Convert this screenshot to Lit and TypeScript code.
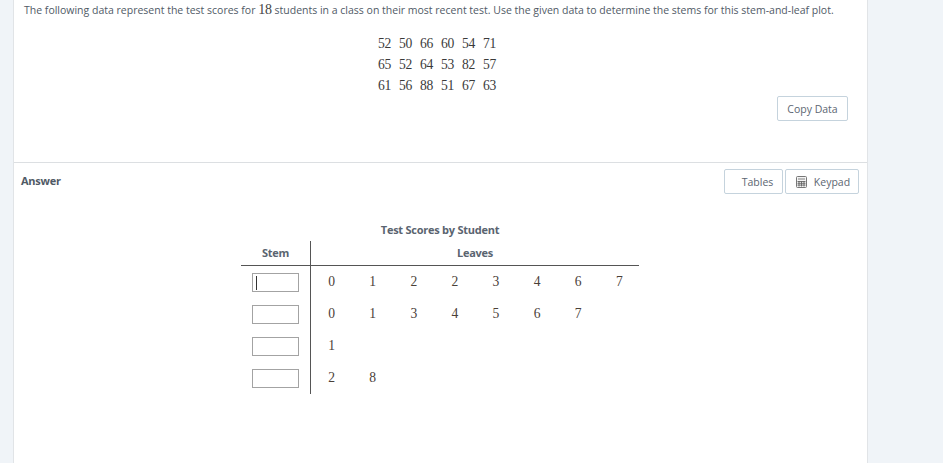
import { LitElement, html, css } from "lit";
import { customElement } from "lit/decorators.js";

const DATA = [
  [52, 50, 66, 60, 54, 71],
  [65, 52, 64, 53, 82, 57],
  [61, 56, 88, 51, 67, 63],
];
const PLOT = [
  ["0", "1", "2", "2", "3", "4", "6", "7"],
  ["0", "1", "3", "4", "5", "6", "7"],
  ["1"],
  ["2", "8"],
];

@customElement("app-root")
export class AppRoot extends LitElement {
  static styles = css`
    :host { display: block; width: 943px; height: 463px; overflow: hidden; background: #f0f4f8; font-family: "Open Sans", sans-serif; color: #505a66; }
    * { box-sizing: border-box; }
    .panel { width: 855px; height: 463px; margin-left: 13px; background: #fff; border-left: 1px solid #e1e4e7; border-right: 1px solid #e1e4e7; display: flex; flex-direction: column; }
    .question { height: 163px; border-bottom: 1px solid #dcdfe2; display: flex; flex-direction: column; padding: 3px 19px 0 10px; }
    .prompt { font-size: 10.5px; line-height: 13px; letter-spacing: 0; white-space: nowrap; }
    .prompt .n { font-family: "Liberation Serif", serif; font-size: 14px; color: #444; letter-spacing: -0.2px; }
    .data { margin: 16px 0 0 354px; display: flex; flex-direction: column; font-family: "Liberation Serif", serif; font-size: 13.6px; letter-spacing: -0.2px; line-height: 21px; color: #3a3a3a; }
    .data div { display: grid; grid-template-columns: repeat(6, 21px); width: 126px; }
    .copy-row { display: flex; justify-content: flex-end; margin-top: 0; }
    button { font: inherit; font-size: 10.5px; color: #5c6672; background: #fff; border: 1px solid #c5d3dd; border-radius: 2px; height: 25px; padding: 0; display: flex; align-items: center; justify-content: center; }
    .copy { width: 71px; }
    .answer { flex: 1; padding: 6px 8px 0 7px; }
    .bar { display: flex; align-items: center; gap: 2px; }
    .label { font-size: 11px; font-weight: 700; letter-spacing: -0.25px; margin-right: auto; padding-bottom: 2px; }
    .tables { width: 59px; padding-left: 8px; }
    .keypad { width: 74px; gap: 7px; padding-left: 2px; }
    .plot { width: 398px; margin: 28px 0 0 220px; }
    .title { font-size: 11px; font-weight: 700; letter-spacing: -0.25px; text-align: center; line-height: 16px; color: #5a6470; }
    .head, .row { display: grid; grid-template-columns: 69px 1fr; }
    .head { height: 25px; margin-top: 3px; border-bottom: 1px solid #555; font-size: 11px; font-weight: 700; letter-spacing: -0.25px; line-height: 23px; text-align: center; color: #5a6470; }
    .head .leaves { border-left: 1px solid #555; }
    .stem { display: flex; justify-content: center; align-items: center; }
    .input { width: 47px; height: 19px; border: 1px solid #a3a3a3; padding: 2px 0 0 3px; }
    .caret { display: block; width: 1px; height: 14px; background: #333; }
    .leafs { border-left: 1px solid #555; display: grid; grid-template-columns: repeat(8, 41.1px); align-items: center; font-family: "Liberation Serif", serif; font-size: 13.6px; letter-spacing: -0.2px; color: #4a4038; text-align: center; height: 32px; }
    .body .row:last-child .leafs { padding-bottom: 1px; }
  `;

  render() {
    return html`
      <div class="panel">
        <section class="question">
          <div class="prompt">The following data represent the test scores for <span class="n">18</span> students in a class on their most recent test. Use the given data to determine the stems for this stem-and-leaf plot.</div>
          <div class="data">
            ${DATA.map((r) => html`<div>${r.map((v) => html`<span>${v}</span>`)}</div>`)}
          </div>
          <div class="copy-row"><button class="copy">Copy Data</button></div>
        </section>
        <section class="answer">
          <div class="bar">
            <span class="label">Answer</span>
            <button class="tables">Tables</button>
            <button class="keypad">
              <svg width="11" height="12" viewBox="0 0 11 12" aria-hidden="true">
                <rect x=".5" y=".5" width="10" height="11" rx="1" fill="#f4f4f4" stroke="#777" />
                <rect x="2" y="2" width="7" height="2" fill="#bbb" />
                <path d="M1.5 5.5h8M1.5 7.3h8M1.5 9.1h8M3 5v5.5M5.5 5v5.5M8 5v5.5" stroke="#666" stroke-width=".9" fill="none" />
              </svg>
              Keypad
            </button>
          </div>
          <div class="plot">
            <div class="title">Test Scores by Student</div>
            <div class="head"><span>Stem</span><span class="leaves">Leaves</span></div>
            <div class="body">
              ${PLOT.map(
                (r, i) => html`<div class="row">
                  <div class="stem"><div class="input">${i === 0 ? html`<span class="caret"></span>` : ""}</div></div>
                  <div class="leafs">${r.map((v) => html`<span>${v}</span>`)}</div>
                </div>`
              )}
            </div>
          </div>
        </section>
      </div>
    `;
  }
}
